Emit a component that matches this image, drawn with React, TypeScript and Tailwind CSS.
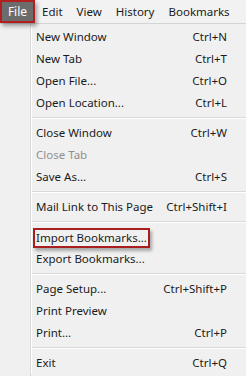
import React from "react";

type Item =
  | { type: "sep" }
  | { type: "item"; label: string; shortcut?: string; disabled?: boolean; boxed?: boolean };

const items: Item[] = [
  { type: "item", label: "New Window", shortcut: "Ctrl+N" },
  { type: "item", label: "New Tab", shortcut: "Ctrl+T" },
  { type: "item", label: "Open File...", shortcut: "Ctrl+O" },
  { type: "item", label: "Open Location...", shortcut: "Ctrl+L" },
  { type: "sep" },
  { type: "item", label: "Close Window", shortcut: "Ctrl+W" },
  { type: "item", label: "Close Tab", disabled: true },
  { type: "item", label: "Save As...", shortcut: "Ctrl+S" },
  { type: "sep" },
  { type: "item", label: "Mail Link to This Page", shortcut: "Ctrl+Shift+I" },
  { type: "sep" },
  { type: "item", label: "Import Bookmarks...", boxed: true },
  { type: "item", label: "Export Bookmarks..." },
  { type: "sep" },
  { type: "item", label: "Page Setup...", shortcut: "Ctrl+Shift+P" },
  { type: "item", label: "Print Preview" },
  { type: "item", label: "Print...", shortcut: "Ctrl+P" },
  { type: "sep" },
  { type: "item", label: "Exit", shortcut: "Ctrl+Q" },
];

export default function App() {
  return (
    <div
      className="w-[246px] h-[376px] overflow-hidden bg-[#f0f0f0] text-[11.5px] text-[#1b1b1b] flex flex-col"
      style={{ fontFamily: '"Noto Sans", "Open Sans", sans-serif' }}
    >
      {/* Menu bar */}
      <div className="h-[24px] shrink-0 flex items-stretch border-b border-[#d4d4d4] bg-[#f2f2f2]">
        <div className="relative z-10 w-[35px] h-[23px] flex items-center justify-center bg-[#6c6c6c] border-2 border-[#b21f1f] text-white text-[12px] shadow-[2px_3px_4px_rgba(0,0,0,0.35)]">
          File
        </div>
        {["Edit", "View", "History", "Bookmarks"].map((m) => (
          <div key={m} className="px-[7px] pt-[1px] flex items-center leading-none text-[11.5px]">
            {m}
          </div>
        ))}
      </div>

      {/* Dropdown */}
      <div className="flex flex-1">
        <div className="w-[30px] shrink-0" />
        <div className="flex-1 border-l border-[#d8d8d8] pt-[2px]">
          <div className="border-l border-white">
            {items.map((it, i) =>
              it.type === "sep" ? (
                <div key={i} className="h-[8px] flex flex-col justify-center">
                  <div className="h-px bg-[#d9d9d9]" />
                  <div className="h-px bg-white" />
                </div>
              ) : (
                <div
                  key={i}
                  className={`h-[22px] flex items-center justify-between pl-[4px] pr-[19px] whitespace-nowrap ${
                    it.disabled ? "text-[#8f8f8f]" : ""
                  }`}
                >
                  {it.boxed ? (
                    <span className="-ml-[3px] px-[1px] h-[20px] translate-y-[1px] flex items-center border-2 border-[#a81d1d] shadow-[2px_3px_3px_rgba(0,0,0,0.3)]">
                      {it.label}
                    </span>
                  ) : (
                    <span>{it.label}</span>
                  )}
                  {it.shortcut && <span>{it.shortcut}</span>}
                </div>
              )
            )}
          </div>
        </div>
      </div>
    </div>
  );
}
